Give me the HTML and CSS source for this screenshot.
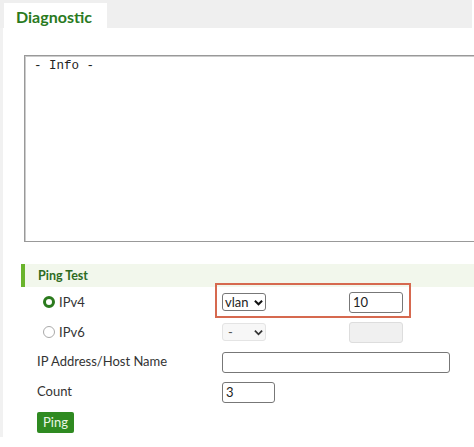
FILE: index.html
```html
<!DOCTYPE html>
<html>
<head>
<meta charset="utf-8">
<link rel="stylesheet" href="styles.css">
</head>
<body>
<div class="tabs">
  <div class="tab">Diagnostic</div>
</div>
<div class="content">
  <div class="info">- Info -</div>
  <section class="ping">
    <h2 class="section-title">Ping Test</h2>
    <div class="form">
      <label class="radio-label"><span class="radio checked"></span>IPv4</label>
      <div class="ctl"><span class="select">vlan<svg class="chev" viewBox="0 0 10 7"><path d="M1 1.5 L5 5.5 L9 1.5" fill="none" stroke="#111" stroke-width="2.2"/></svg></span></div>
      <div class="ctl"><span class="input short">10</span></div>

      <label class="radio-label"><span class="radio"></span>IPv6</label>
      <div class="ctl"><span class="select disabled">-<svg class="chev" viewBox="0 0 10 7"><path d="M1 1.5 L5 5.5 L9 1.5" fill="none" stroke="#333" stroke-width="2"/></svg></span></div>
      <div class="ctl"><span class="input short disabled"></span></div>

      <div class="label">IP Address/Host Name</div>
      <div class="ctl wide"><span class="input long"></span></div>

      <div class="label">Count</div>
      <div class="ctl wide"><span class="input count">3</span></div>

      <div class="btn-row"><button class="btn">Ping</button></div>
    </div>
    <div class="highlight"></div>
  </section>
</div>
</body>
</html>
```
FILE: styles.css
```css
html, body {
  margin: 0;
  padding: 0;
  background: #fff;
  font-family: "Century Gothic", "Lato", "Open Sans", sans-serif;
  color: #333;
}
body {
  width: 474px;
  height: 447px;
  overflow: hidden;
}
.tabs {
  height: 28px;
  background: #efefef;
  padding-left: 4px;
  padding-top: 3px;
  box-sizing: border-box;
  display: flex;
  margin-right: 2px;
}
.tab {
  width: 103px;
  background: #fff;
  color: #2a7a1e;
  font-weight: bold;
  font-size: 16px;
  padding-left: 12px;
  padding-top: 5px;
  box-sizing: border-box;
  line-height: 17px;
}
.content {
  position: relative;
  padding-top: 27px;
  border-left: 3px solid #f1f1f1;
}
.info {
  margin-left: 21px;
  width: 460px;
  height: 187px;
  box-sizing: border-box;
  border: 1px solid #999;
  box-shadow: inset 1px 1px 0 #ccc;
  font-family: "Liberation Mono", monospace;
  font-size: 12.5px;
  padding: 3px 0 0 9px;
  line-height: 14px;
  color: #222;
}
.ping {
  position: relative;
  margin-top: 22px;
  margin-left: -3px;
}
.section-title {
  margin: 0 0 0 21px;
  height: 23px;
  border-left: 4px solid #6ab42c;
  background: #f2f7ec;
  color: #2d6b1f;
  font-size: 12.5px;
  font-weight: bold;
  padding-left: 13px;
  line-height: 24px;
}
.form {
  display: grid;
  grid-template-columns: 185px 127px auto;
  grid-auto-rows: 30px;
  padding-left: 37px;
  padding-top: 0;
  font-size: 13px;
  color: #333;
}
.radio-label, .label, .ctl {
  display: flex;
  align-items: center;
}
.radio-label {
  padding-left: 6px;
}
.label {
  padding-bottom: 2px;
}
.radio {
  width: 12px;
  height: 12px;
  border-radius: 50%;
  border: 1px solid #aaa;
  box-sizing: border-box;
  margin-right: 4px;
  background: #fff;
}
.radio.checked {
  border: 3.5px solid #2b7a1d;
}
.wide {
  grid-column: 2 / 4;
}
.select {
  display: inline-flex;
  align-items: center;
  justify-content: space-between;
  width: 44px;
  height: 18px;
  box-sizing: border-box;
  border: 1px solid #777;
  border-radius: 3px;
  padding: 0 2px 0 2px;
  font-size: 13px;
  color: #222;
}
.select.disabled {
  border-color: #e4e4e4;
  background: #f7f7f7;
  color: #555;
  padding-left: 5px;
}
.chev {
  width: 9px;
  height: 7px;
}
.input {
  display: inline-flex;
  align-items: center;
  height: 21px;
  box-sizing: border-box;
  border: 1px solid #777;
  border-radius: 3px;
  padding-left: 3px;
  font-size: 13px;
  color: #222;
}
.input.short { width: 54px; }
.input.disabled { background: #f0f0f0; border-color: #ddd; }
.input.long { width: 228px; }
.input.count { width: 53px; }
.btn-row {
  grid-column: 1 / 4;
  display: flex;
  align-items: center;
}
.btn {
  height: 21px;
  width: 37px;
  padding: 0;
  border: none;
  border-radius: 2px;
  background: #2f8a21;
  color: #e9f5e4;
  font-family: inherit;
  font-size: 13px;
}
.highlight {
  position: absolute;
  left: 215px;
  top: 19px;
  width: 196px;
  height: 35px;
  box-sizing: border-box;
  border: 2px solid #d6694f;
  pointer-events: none;
}
```
